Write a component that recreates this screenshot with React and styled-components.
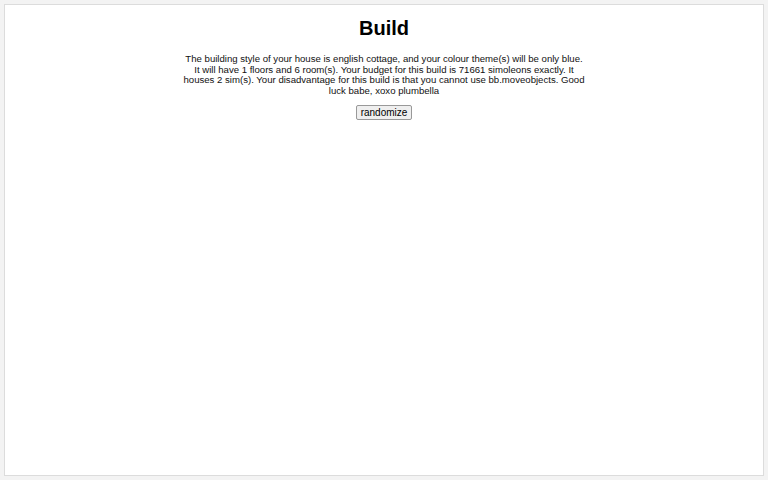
import styled, { createGlobalStyle } from "styled-components";

const GlobalStyle = createGlobalStyle`
  html, body {
    margin: 0;
    padding: 0;
    background: #f3f3f3;
  }
  body {
    font-family: "Liberation Sans", Arial, sans-serif;
  }
`;

const Page = styled.div`
  padding: 4px;
  height: 480px;
  box-sizing: border-box;
`;

const Panel = styled.div`
  height: 100%;
  box-sizing: border-box;
  background: #fff;
  border: 1px solid #dcdcdc;
  display: flex;
  flex-direction: column;
  align-items: center;
  padding-top: 12px;
`;

const Title = styled.h1`
  margin: 0;
  font-size: 20px;
  font-weight: bold;
  color: #000;
`;

const Blurb = styled.p`
  width: 402px;
  margin: 14px 0 0;
  font-size: 9.6px;
  line-height: 10.7px;
  text-align: center;
  color: #111;
`;

const Button = styled.button`
  margin-top: 8px;
  font-family: "Liberation Sans", Arial, sans-serif;
  font-size: 10px;
  padding: 1px 4px;
  background: #efefef;
  border: 1px solid #999;
  border-radius: 2px;
  color: #000;
`;

export default function App() {
  return (
    <Page>
      <GlobalStyle />
      <Panel>
        <Title>Build</Title>
        <Blurb>
          The building style of your house is english cottage, and your colour
          theme(s) will be only blue. It will have 1 floors and 6 room(s). Your
          budget for this build is 71661 simoleons exactly. It houses 2 sim(s).
          Your disadvantage for this build is that you cannot use
          bb.moveobjects. Good luck babe, xoxo plumbella
        </Blurb>
        <Button>randomize</Button>
      </Panel>
    </Page>
  );
}
